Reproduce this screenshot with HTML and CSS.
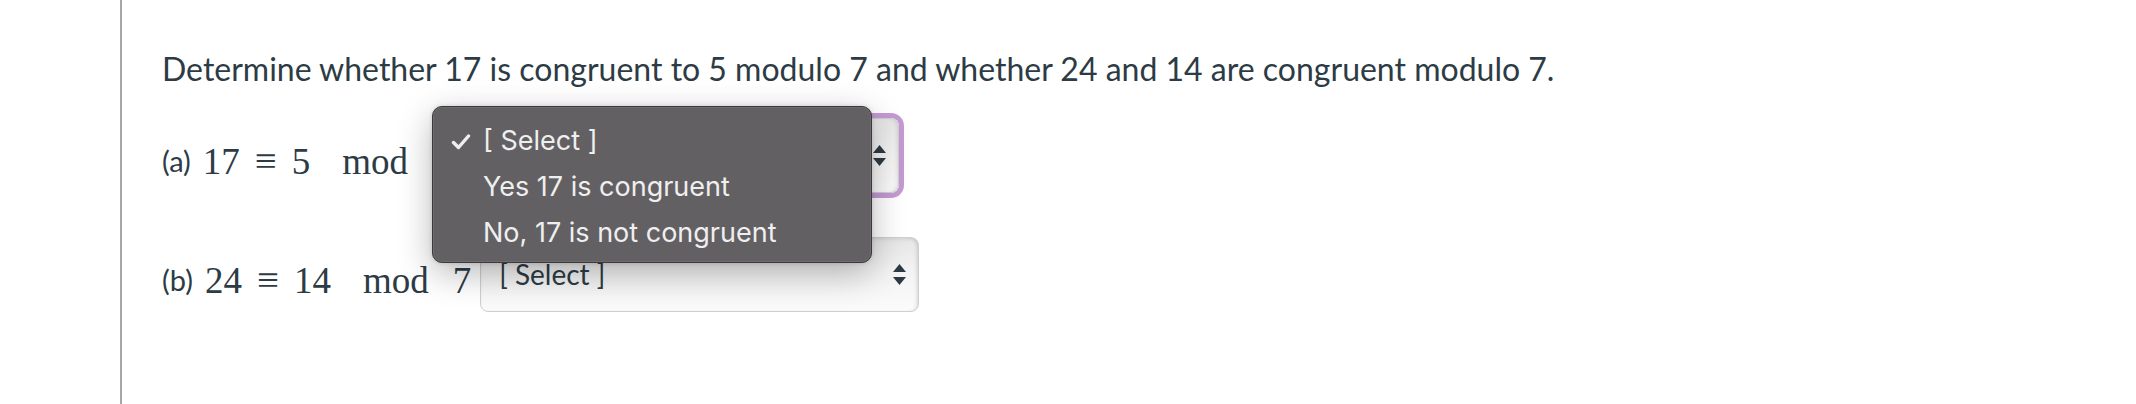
FILE: index.html
```html
<!DOCTYPE html>
<html lang="en">
<head>
<meta charset="utf-8">
<title>Congruence question</title>
<link rel="stylesheet" href="styles.css">
</head>
<body>
<div class="content">
  <p class="question">Determine whether 17 is congruent to 5 modulo 7 and whether 24 and 14 are congruent modulo 7.</p>

  <div class="row row-a">
    <span class="label">(a)</span>
    <span class="math"><span class="n">17</span><span class="rel">≡</span><span class="n">5</span><span class="op">mod</span><span class="n">7</span></span>
    <div class="select focused">
      <span class="select-text">[ Select ]</span>
      <svg class="arrows" width="13" height="21" viewBox="0 0 13 21"><polygon points="0,8 6.5,0 13,8"/><polygon points="0,13 13,13 6.5,21"/></svg>
    </div>
  </div>

  <div class="row row-b">
    <span class="label">(b)</span>
    <span class="math"><span class="n">24</span><span class="rel">≡</span><span class="n">14</span><span class="op">mod</span><span class="n">7</span></span>
    <div class="select">
      <span class="select-text">[ Select ]</span>
      <svg class="arrows" width="13" height="21" viewBox="0 0 13 21"><polygon points="0,8 6.5,0 13,8"/><polygon points="0,13 13,13 6.5,21"/></svg>
    </div>
  </div>
</div>

<div class="menu">
  <div class="item checked">
    <svg class="check" width="20" height="16" viewBox="0 0 20 16"><polyline points="2.5,8.5 7.5,13.5 17.5,2"/></svg>
    <span>[ Select ]</span>
  </div>
  <div class="item"><span>Yes 17 is congruent</span></div>
  <div class="item"><span>No, 17 is not congruent</span></div>
</div>
</body>
</html>
```

FILE: styles.css
```css
html, body {
  margin: 0;
  padding: 0;
  background: #ffffff;
}

body {
  position: relative;
  width: 2136px;
  height: 404px;
  overflow: hidden;
  padding-left: 120px;
  box-sizing: border-box;
}

.content {
  border-left: 2px solid #a6a6a6;
  height: 404px;
  padding-left: 40px;
  box-sizing: border-box;
  color: #2d3b45;
  font-family: Lato, "Liberation Sans", sans-serif;
}

.question {
  margin: 0;
  padding-top: 46px;
  font-size: 32px;
  line-height: 45px;
}

.row {
  display: flex;
  align-items: flex-start;
}

.row-a {
  margin-top: 27px;
}

.row-b {
  margin-top: 44px;
}

.label {
  font-family: Lato, "Liberation Sans", sans-serif;
  font-size: 29px;
  line-height: 40px;
  margin-top: 23px;
  margin-right: 12px;
}

.math {
  font-family: "Liberation Serif", "DejaVu Serif", serif;
  font-size: 37px;
  line-height: 40px;
  margin-top: 23px;
  display: flex;
  align-items: baseline;
  white-space: nowrap;
}

.rel {
  font-size: 39px;
  margin: 0 15px 0 15px;
}

.op {
  margin-left: 32px;
  margin-right: 24px;
}

.select {
  margin-left: 9px;
  width: 439px;
  height: 75px;
  box-sizing: border-box;
  border: 1px solid #cfcfcf;
  border-radius: 8px;
  background: linear-gradient(to bottom, #e6e6e6 0%, #f3f3f3 45%, #fbfbfb 100%);
  box-shadow: inset -3px 0 4px -2px rgba(0, 0, 0, 0.12), inset 0 2px 3px rgba(0, 0, 0, 0.06);
  display: flex;
  align-items: center;
  justify-content: space-between;
  padding: 0 12px 0 18px;
}

.select.focused {
  box-shadow: 0 0 0 5px #c49ad3, inset -3px 0 4px -2px rgba(0, 0, 0, 0.12);
}

.select-text {
  font-family: Lato, "Liberation Sans", sans-serif;
  font-size: 28px;
  color: #2d3b45;
  line-height: 1;
  margin-bottom: 2px;
}

.arrows {
  fill: #2d3b45;
  display: block;
}

.menu {
  position: absolute;
  left: 432px;
  top: 106px;
  width: 440px;
  height: 157px;
  box-sizing: border-box;
  background: #636064;
  border: 1px solid #3c3a3d;
  border-radius: 10px;
  box-shadow: inset 0 0 0 1px rgba(255, 255, 255, 0.08), 0 10px 34px rgba(0, 0, 0, 0.28), 0 0 4px rgba(0, 0, 0, 0.15);
  padding: 11px 0 6px 0;
  font-family: Inter, "Liberation Sans", sans-serif;
  font-size: 27px;
  color: #efefef;
}

.item {
  height: 46px;
  line-height: 46px;
  display: flex;
  align-items: center;
  padding-left: 50px;
  position: relative;
}

.item span {
  line-height: 46px;
}

.check {
  position: absolute;
  left: 18px;
  top: 16px;
  fill: none;
  stroke: #efefef;
  stroke-width: 3.4;
  stroke-linecap: round;
  stroke-linejoin: round;
}
```
